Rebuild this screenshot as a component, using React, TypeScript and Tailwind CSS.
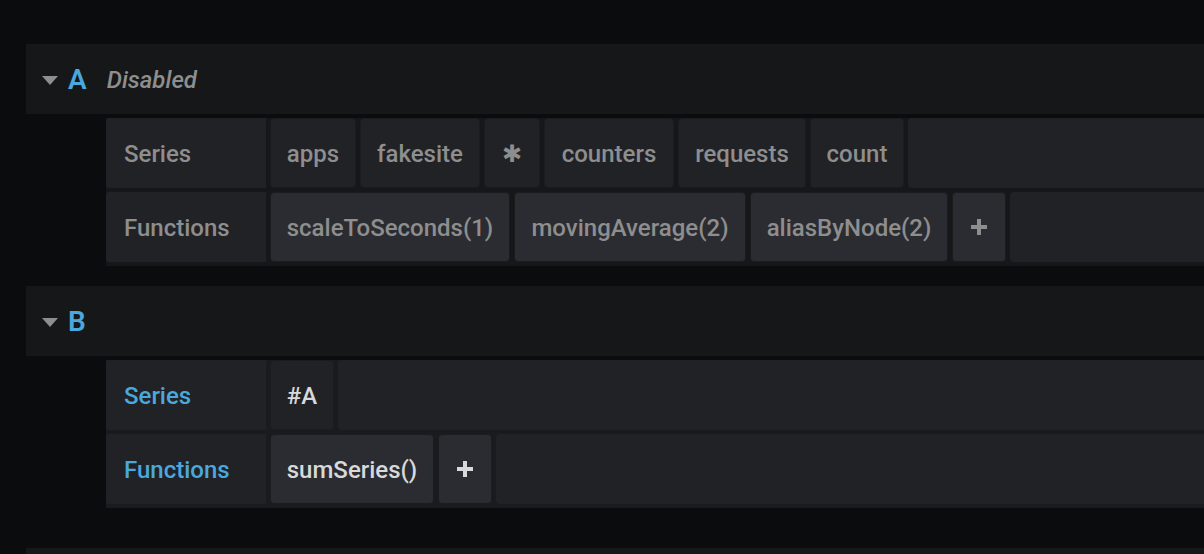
import React from 'react';

type Seg = { text: string; kind?: 'fn' | 'plain' };

const font = { fontFamily: 'Roboto, "Liberation Sans", sans-serif' };

function Caret() {
  return (
    <svg width="16" height="9" viewBox="0 0 16 9" className="shrink-0">
      <path d="M0 0 L16 0 L8 9 Z" fill="#8e8e8e" />
    </svg>
  );
}

function Row({ label, segs, active, plus, widths }: { label: string; segs: Seg[]; active: boolean; plus?: boolean; widths: number[] }) {
  return (
    <div className="flex h-[70px] gap-[4px]">
      <div className={`w-[160px] shrink-0 rounded-l-[3px] bg-[#212226] flex items-center pl-[18px] pt-[2px] ${active ? 'text-[#4aa8de]' : 'text-[#8e8e8e]'}`}>
        {label}
      </div>
      {segs.map((s, i) => (
        <div
          key={i}
          style={{ width: widths[i] }}
          className={`shrink-0 rounded-[4px] border border-[#1b1c1f] flex items-center justify-center pt-[2px] ${s.kind === 'fn' ? 'bg-[#2b2c31]' : 'bg-[#212226]'} ${active ? 'text-[#d8d9da]' : 'text-[#8e8e8e]'}`}
        >
          {s.text}
        </div>
      ))}
      {plus && (
        <div className="w-[54px] shrink-0 rounded-[4px] border border-[#1b1c1f] bg-[#2b2c31] flex items-center justify-center">
          <svg width="18" height="18" viewBox="0 0 18 18">
            <path d="M9 1 V17 M1 9 H17" stroke={active ? '#d8d9da' : '#8e8e8e'} strokeWidth="4" />
          </svg>
        </div>
      )}
      <div className="flex-1 rounded-l-[4px] bg-[#212226]" />
    </div>
  );
}

function Header({ letter, disabled }: { letter: string; disabled?: boolean }) {
  return (
    <div className="ml-[26px] h-[70px] bg-[#161719] flex items-center pl-[16px] pt-[2px]">
      <Caret />
      <span className="ml-[10px] text-[28px] font-semibold text-[#4aa8de]">{letter}</span>
      {disabled && <span className="ml-[20px] text-[24px] italic font-medium text-[#8e8e8e]">Disabled</span>}
    </div>
  );
}

export default function App() {
  return (
    <div className="w-[1204px] h-[554px] overflow-hidden bg-[#0b0c0e] pt-[44px] text-[24px] font-medium" style={font}>
      <Header letter="A" disabled />
      <div className="ml-[106px] mt-[4px] bg-[#161719] flex flex-col gap-[4px] pb-[4px]">
        <Row
          label="Series"
          active={false}
          widths={[86, 120, 56, 130, 128, 94]}
          segs={[{ text: 'apps' }, { text: 'fakesite' }, { text: '✱' }, { text: 'counters' }, { text: 'requests' }, { text: 'count' }]}
        />
        <Row
          label="Functions"
          active={false}
          plus
          widths={[240, 232, 198]}
          segs={[{ text: 'scaleToSeconds(1)', kind: 'fn' }, { text: 'movingAverage(2)', kind: 'fn' }, { text: 'aliasByNode(2)', kind: 'fn' }]}
        />
      </div>
      <div className="mt-[20px]">
        <Header letter="B" />
      </div>
      <div className="ml-[106px] mt-[4px] bg-[#1a1b1e] flex flex-col gap-[4px] pb-[4px]">
        <Row label="Series" active widths={[64]} segs={[{ text: '#A' }]} />
        <Row label="Functions" active plus widths={[164]} segs={[{ text: 'sumSeries()', kind: 'fn' }]} />
      </div>
      <div className="ml-[26px] mt-[40px] h-[70px] bg-[#161719]" />
    </div>
  );
}
